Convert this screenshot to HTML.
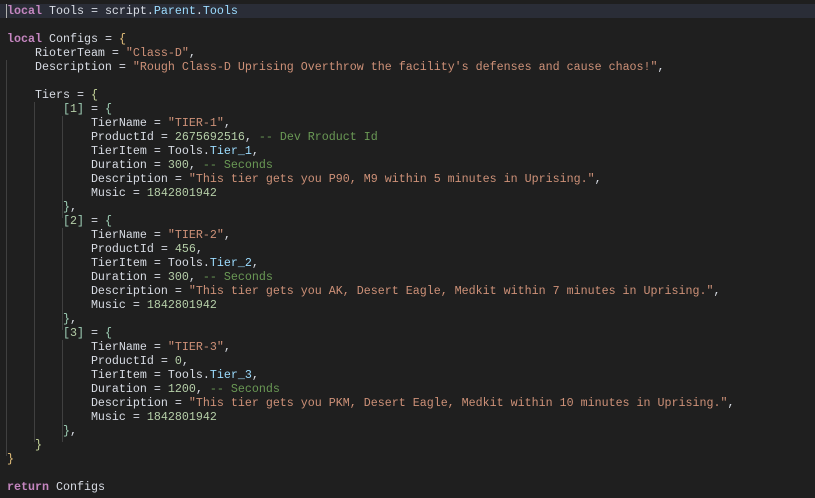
<!DOCTYPE html>
<html><head><meta charset="utf-8"><style>
html,body{margin:0;padding:0;background:#1f1f1f;width:815px;height:498px;overflow:hidden}
.ed{position:relative;font-family:"Liberation Mono",monospace;font-size:11.67px;line-height:14px;color:#d8dce4;padding-top:4px}
.l{height:14px;white-space:pre;padding-left:7px;position:relative}
.hl{position:absolute;left:0;top:4px;width:815px;height:14px;background:#2a2d37}
.cur{position:absolute;left:6px;top:4px;width:1px;height:14px;background:#aeafad}
.g{position:absolute;width:1px;background:#404040}
.k{color:#c586c0;font-weight:bold}.s{color:#ce9178}.n{color:#b5cea8}.c{color:#6a9955}.p{color:#9cdcfe}
.b1{color:#e5c07b}.b2{color:#c6d49a}.b3{color:#9fcfb6}
</style></head><body><div class="ed">
<div class="hl"></div><div class="cur"></div>
<div class="g" style="left:6px;top:60px;height:396px"></div>
<div class="g" style="left:34px;top:102px;height:340px"></div>
<div class="g" style="left:62px;top:116px;height:102px"></div>
<div class="g" style="left:62px;top:228px;height:102px"></div>
<div class="g" style="left:62px;top:340px;height:102px"></div>
<div class="l"><span class="k">local</span> Tools = script.<span class="p">Parent</span>.<span class="p">Tools</span></div>
<div class="l"> </div>
<div class="l"><span class="k">local</span> Configs = <span class="b1">{</span></div>
<div class="l">    RioterTeam = <span class="s">"Class-D"</span>,</div>
<div class="l">    Description = <span class="s">"Rough Class-D Uprising Overthrow the facility's defenses and cause chaos!"</span>,</div>
<div class="l"> </div>
<div class="l">    Tiers = <span class="b2">{</span></div>
<div class="l">        <span class="b3">[</span><span class="n">1</span><span class="b3">]</span> = <span class="b3">{</span></div>
<div class="l">            TierName = <span class="s">"TIER-1"</span>,</div>
<div class="l">            ProductId = <span class="n">2675692516</span>, <span class="c">-- Dev Rroduct Id</span></div>
<div class="l">            TierItem = Tools.<span class="p">Tier_1</span>,</div>
<div class="l">            Duration = <span class="n">300</span>, <span class="c">-- Seconds</span></div>
<div class="l">            Description = <span class="s">"This tier gets you P90, M9 within 5 minutes in Uprising."</span>,</div>
<div class="l">            Music = <span class="n">1842801942</span></div>
<div class="l">        <span class="b3">}</span>,</div>
<div class="l">        <span class="b3">[</span><span class="n">2</span><span class="b3">]</span> = <span class="b3">{</span></div>
<div class="l">            TierName = <span class="s">"TIER-2"</span>,</div>
<div class="l">            ProductId = <span class="n">456</span>,</div>
<div class="l">            TierItem = Tools.<span class="p">Tier_2</span>,</div>
<div class="l">            Duration = <span class="n">300</span>, <span class="c">-- Seconds</span></div>
<div class="l">            Description = <span class="s">"This tier gets you AK, Desert Eagle, Medkit within 7 minutes in Uprising."</span>,</div>
<div class="l">            Music = <span class="n">1842801942</span></div>
<div class="l">        <span class="b3">}</span>,</div>
<div class="l">        <span class="b3">[</span><span class="n">3</span><span class="b3">]</span> = <span class="b3">{</span></div>
<div class="l">            TierName = <span class="s">"TIER-3"</span>,</div>
<div class="l">            ProductId = <span class="n">0</span>,</div>
<div class="l">            TierItem = Tools.<span class="p">Tier_3</span>,</div>
<div class="l">            Duration = <span class="n">1200</span>, <span class="c">-- Seconds</span></div>
<div class="l">            Description = <span class="s">"This tier gets you PKM, Desert Eagle, Medkit within 10 minutes in Uprising."</span>,</div>
<div class="l">            Music = <span class="n">1842801942</span></div>
<div class="l">        <span class="b3">}</span>,</div>
<div class="l">    <span class="b2">}</span></div>
<div class="l"><span class="b1">}</span></div>
<div class="l"> </div>
<div class="l"><span class="k">return</span> Configs</div>
</div></body></html>
